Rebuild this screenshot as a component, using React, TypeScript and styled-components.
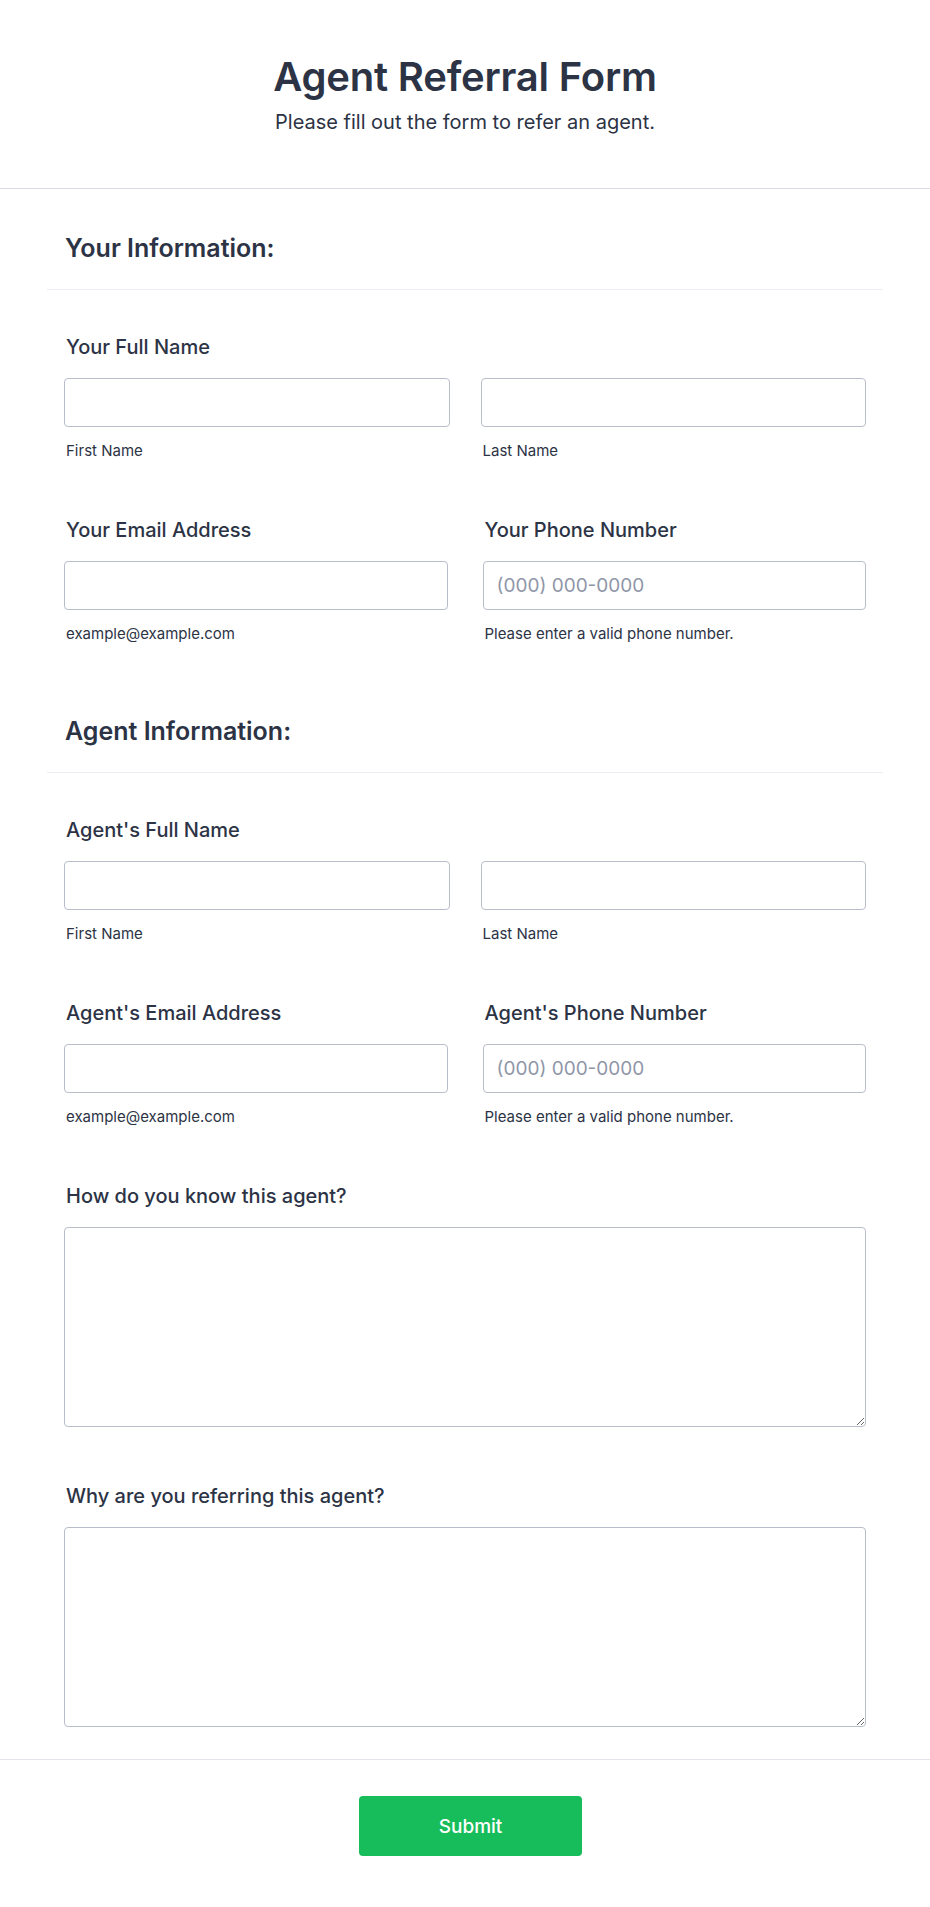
import React from 'react'
import styled, { createGlobalStyle } from 'styled-components'

const GlobalStyle = createGlobalStyle`
    body {
        margin: 0;
        background: #fff;
        font-family: Inter, "Noto Sans", "Liberation Sans", sans-serif;
        color: #2c3345;
    }
    * {
        box-sizing: border-box;
    }
`

interface FieldProps {
    label?: string
    sublabel?: string
    placeholder?: string
}

const Field: React.FC<FieldProps> = ({ label, sublabel, placeholder }) => (
    <FieldBox>
        {label && <Label>{label}</Label>}
        <Input type="text" placeholder={placeholder} />
        {sublabel && <SubLabel>{sublabel}</SubLabel>}
    </FieldBox>
)

const PersonBlock: React.FC<{ who: string }> = ({ who }) => (
    <>
        <Line>
            <Label>{who} Full Name</Label>
            <Columns gap={31}>
                <Field sublabel="First Name" />
                <Field sublabel="Last Name" />
            </Columns>
        </Line>
        <Line>
            <Columns gap={35}>
                <Field label={`${who} Email Address`} sublabel="example@example.com" />
                <Field
                    label={`${who} Phone Number`}
                    placeholder="(000) 000-0000"
                    sublabel="Please enter a valid phone number."
                />
            </Columns>
        </Line>
    </>
)

const App: React.FC = () => {
    return (
        <>
            <GlobalStyle />
            <Header>
                <Title>Agent Referral Form</Title>
                <Subtitle>Please fill out the form to refer an agent.</Subtitle>
            </Header>
            <Form onSubmit={e => e.preventDefault()}>
                <SectionHeading>Your Information:</SectionHeading>
                <PersonBlock who="Your" />
                <SectionHeading>Agent Information:</SectionHeading>
                <PersonBlock who="Agent's" />
                <Line>
                    <Label>How do you know this agent?</Label>
                    <TextArea />
                </Line>
                <Line last>
                    <Label>Why are you referring this agent?</Label>
                    <TextArea />
                </Line>
            </Form>
            <Footer>
                <SubmitButton type="button">Submit</SubmitButton>
            </Footer>
        </>
    )
}

const Header = styled.header`
    display: flex;
    flex-direction: column;
    align-items: center;
    padding: 54px 20px 53px;
    border-bottom: 1px solid #dadbe6;
`

const Title = styled.h1`
    margin: 0;
    font-size: 40px;
    line-height: 46px;
    font-weight: 600;
    letter-spacing: -0.2px;
`

const Subtitle = styled.p`
    margin: 9px 0 0;
    font-size: 20px;
    line-height: 26px;
    font-weight: 400;
`

const Form = styled.form`
    width: 836px;
    margin: 0 auto;
`

const SectionHeading = styled.h2`
    margin: 0;
    padding: 45px 18px 26px;
    font-size: 25px;
    line-height: 29px;
    font-weight: 600;
    border-bottom: 1px solid #eceef3;

    &:not(:first-child) {
        padding-top: 61px;
    }
`

const Line = styled.div<{ last?: boolean }>`
    padding: 45px 17px ${props => (props.last ? '32px' : '12px')};
    display: flex;
    flex-direction: column;
`

const Columns = styled.div<{ gap: number }>`
    display: grid;
    grid-template-columns: 1fr 1fr;
    column-gap: ${props => props.gap}px;
`

const FieldBox = styled.div`
    display: flex;
    flex-direction: column;
`

const Label = styled.label`
    display: block;
    padding-left: 2px;
    margin-bottom: 18px;
    font-size: 20px;
    line-height: 25px;
    font-weight: 500;
`

const Input = styled.input`
    height: 49px;
    width: 100%;
    padding: 0 13px;
    border: 1px solid #b8bdc9;
    border-radius: 4px;
    background: #fff;
    font-family: inherit;
    font-size: 19px;
    color: #2c3345;

    &::placeholder {
        color: #8f96a8;
    }
`

const SubLabel = styled.span`
    display: block;
    padding-left: 2px;
    margin-top: 14px;
    font-size: 15px;
    line-height: 20px;
`

const TextArea = styled.textarea`
    display: block;
    width: 100%;
    height: 200px;
    padding: 12px 13px;
    border: 1px solid #b8bdc9;
    border-radius: 4px;
    font-family: inherit;
    font-size: 16px;
    color: #2c3345;
    resize: vertical;
`

const Footer = styled.footer`
    display: flex;
    justify-content: center;
    padding: 36px 0 50px 11px;
    border-top: 1px solid #e3e5ec;
`

const SubmitButton = styled.button`
    width: 223px;
    height: 60px;
    border: none;
    border-radius: 4px;
    background: #18bd5b;
    color: #fff;
    font-family: inherit;
    font-size: 19px;
    font-weight: 500;
    cursor: pointer;
`

export default App
